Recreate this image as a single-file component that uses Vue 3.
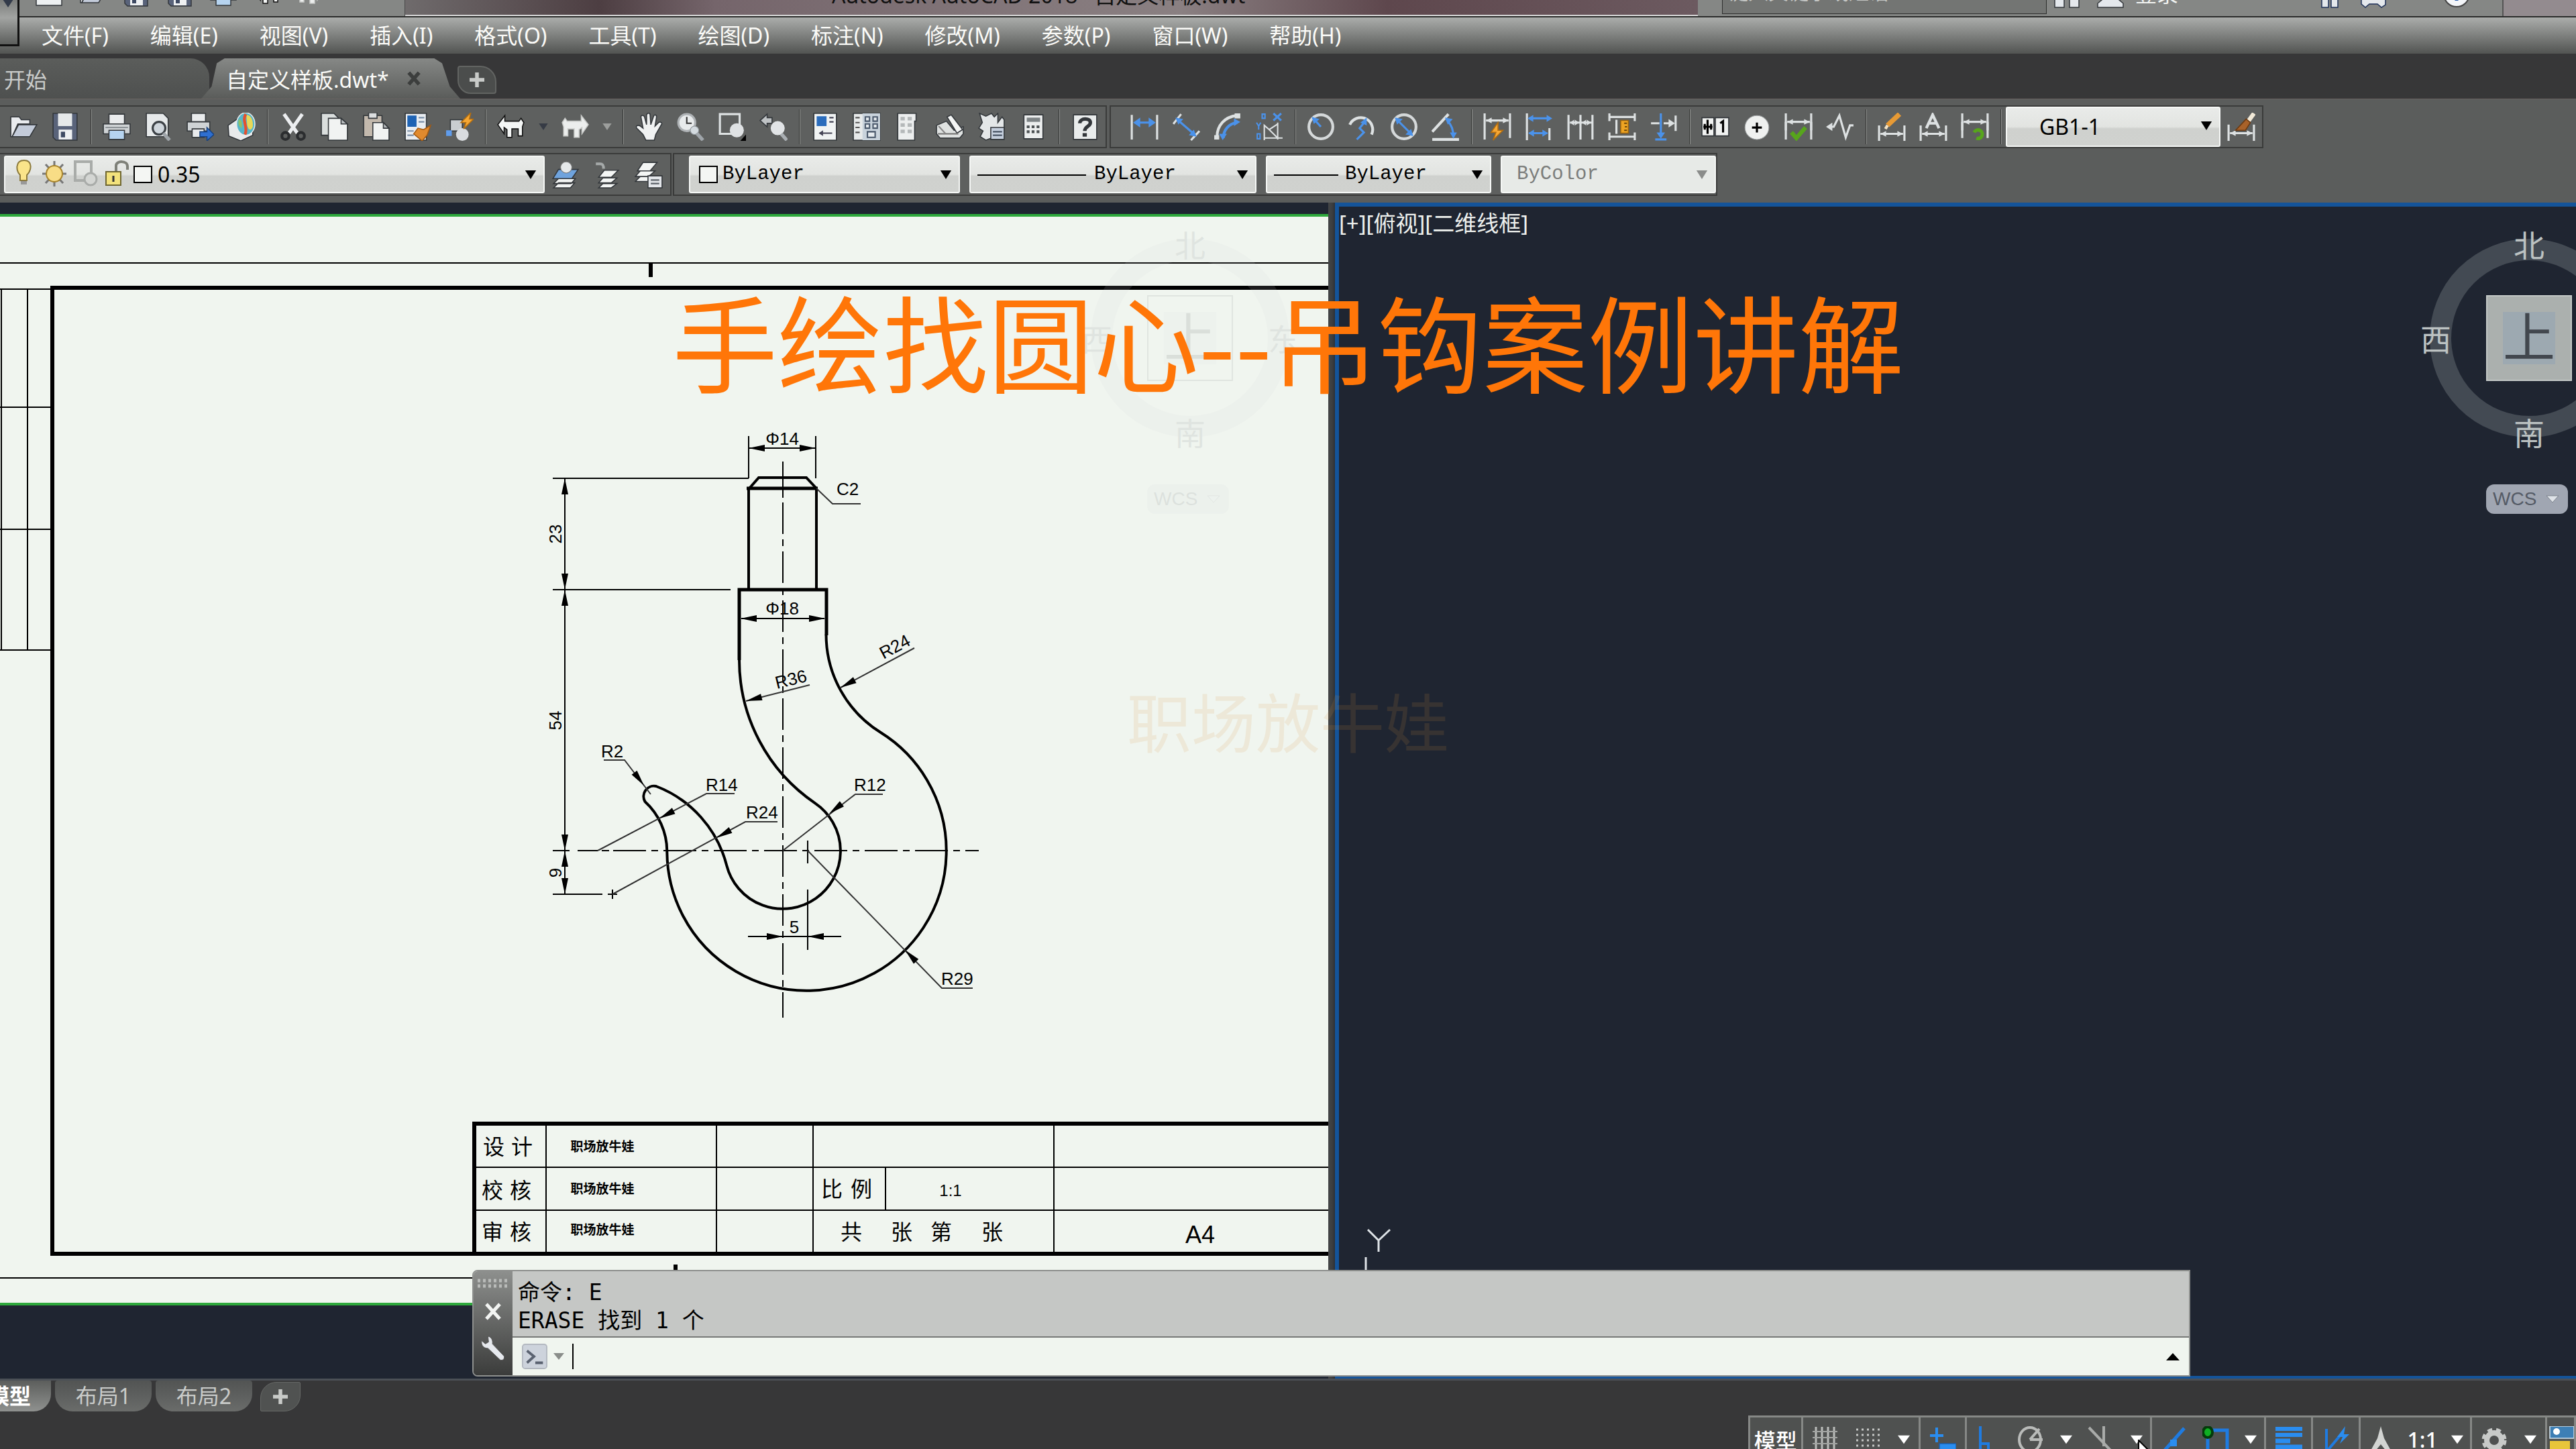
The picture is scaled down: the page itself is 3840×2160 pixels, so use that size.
<template>
  <div class="app">
    <header class="titlebar">
      <div class="quick">
        <button v-for="q in quickIcons" :key="q.label" :aria-label="q.label">
          <svg viewBox="0 0 40 40" v-html="icons[q.icon]"></svg>
        </button>
      </div>
      <div class="caption">Autodesk AutoCAD 2018 &nbsp; 自定义样板.dwt</div>
      <div class="account">
        <input class="search" type="text" aria-label="搜索" placeholder="键入关键字或短语" />
        <button class="find" aria-label="查找"><svg viewBox="0 0 40 40" v-html="icons.binoculars"></svg></button>
        <button class="login">
          <svg viewBox="0 0 40 40" v-html="icons.user"></svg>
          登录
        </button>
        <button class="exchange" aria-label="应用"><svg viewBox="0 0 40 40" v-html="icons.exchange"></svg></button>
        <button aria-label="连接"><svg viewBox="0 0 40 40" v-html="icons.cloud"></svg></button>
        <button class="info" aria-label="帮助"><svg viewBox="0 0 40 40" v-html="icons.info"></svg></button>
        <div class="winbuttons"><button aria-label="最小化"></button></div>
      </div>
    </header>
    <button class="appmenu" aria-label="应用程序菜单">
      <svg viewBox="0 0 16 12"><path d="M0 0h16L8 12z" /></svg>
    </button>

    <nav class="menubar">
      <a v-for="m in menus" :key="m" href="#">{{ m }}</a>
    </nav>

    <div class="filetabs">
      <button class="filetab start">开始</button>
      <button class="filetab active">
        自定义样板.dwt*
        <svg viewBox="0 0 20 20"><path d="M3 2l14 16M17 2L3 18" stroke="#3c3e3d" stroke-width="5" /></svg>
      </button>
      <button class="newtab" aria-label="新建">
        <svg viewBox="0 0 20 20"><path d="M10 0v20M0 10h20" stroke="#c8cac8" stroke-width="5" /></svg>
      </button>
    </div>

    <div class="toolbars">
      <div class="row">
        <div v-for="(bar, b) in toolbars" :key="b" class="toolbar" :class="{ dims: b === 1 }">
          <template v-for="(t, i) in bar" :key="i">
            <i v-if="t === '|'" class="sep"></i>
            <button v-else-if="t === 'caret' || t === 'caretDim'" class="drop" :class="t" aria-label="更多">
              <svg viewBox="0 0 16 12"><path d="M0 0h16L8 12z" /></svg>
            </button>
            <button v-else class="tool" :aria-label="t"><svg viewBox="0 0 40 40" v-html="icons[t]"></svg></button>
          </template>
          <template v-if="b === 1">
            <div class="combo style">
              <select aria-label="标注样式"><option>GB1-1</option></select>
              <svg class="arrow" viewBox="0 0 20 16"><path d="M0 0h20L10 16z" /></svg>
            </div>
            <button class="tool" aria-label="标注样式管理"><svg viewBox="0 0 40 40" v-html="icons.dimStyle"></svg></button>
          </template>
        </div>
      </div>
      <div class="row">
        <div class="toolbar layers">
          <div class="combo layer">
            <svg class="layericons" viewBox="0 0 210 48" v-html="layerIcons"></svg>
            <select aria-label="图层"><option>0.35</option></select>
            <svg class="arrow" viewBox="0 0 20 16"><path d="M0 0h20L10 16z" /></svg>
          </div>
          <button v-for="t in ['layerCurrent', 'layerPrev', 'layerState']" :key="t" class="tool" :aria-label="t">
            <svg viewBox="0 0 40 40" v-html="icons[t]"></svg>
          </button>
        </div>
        <div class="toolbar props">
          <div class="combo color">
            <span class="swatch"></span>
            <select aria-label="颜色"><option>ByLayer</option></select>
            <svg class="arrow" viewBox="0 0 20 16"><path d="M0 0h20L10 16z" /></svg>
          </div>
          <div class="combo linetype">
            <span class="sample"></span>
            <select aria-label="线型"><option>ByLayer</option></select>
            <svg class="arrow" viewBox="0 0 20 16"><path d="M0 0h20L10 16z" /></svg>
          </div>
          <div class="combo weight">
            <span class="sample"></span>
            <select aria-label="线宽"><option>ByLayer</option></select>
            <svg class="arrow" viewBox="0 0 20 16"><path d="M0 0h20L10 16z" /></svg>
          </div>
          <div class="combo plot">
            <select aria-label="打印样式" disabled><option>ByColor</option></select>
            <svg class="arrow" viewBox="0 0 20 16"><path d="M0 0h20L10 16z" /></svg>
          </div>
        </div>
      </div>
    </div>

    <main class="workspace">
      <section class="viewport left">
        <svg class="sheet" viewBox="0 302 1980 1753" preserveAspectRatio="xMinYMin meet">
          <rect x="0" y="322" width="1980" height="1621" fill="#f0f5ef" />
          <path d="M0 321H1980M0 1944H1980" stroke="#2ea83c" stroke-width="4" />

          <!-- sheet frame -->
          <g fill="none" stroke="#000" stroke-width="2">
            <path d="M0 392H1980M0 1905H1980M2 431V969M41 431V969M0 431H78M0 607H78M0 789H78M0 969H78" />
            <path d="M970 392v21M1007 1885v20" stroke-width="6" />
            <path d="M1980 429H78V1869H1980" stroke-width="6" />
          </g>

          <!-- title block -->
          <g fill="none" stroke="#000" stroke-width="2">
            <path d="M1980 1675H707V1869" stroke-width="6" />
            <path d="M707 1740H1980M707 1804H1980M814 1675V1869M1068 1675V1869M1212 1675V1869M1320 1740V1804M1571 1675V1869" />
          </g>
          <g class="block">
            <text v-for="t in blockText" :key="t.x + '-' + t.y" :x="t.x" :y="t.y" :class="t.cls">{{ t.s }}</text>
          </g>

          <!-- centre lines -->
          <g fill="none" stroke="#000" stroke-width="2">
            <path d="M1167 688V742M824 1268H849M861 1268H891M897 1268H908" />
            <path d="M1167 749V1517" stroke-dasharray="47 8 10 8" />
            <path d="M914 1268H1459" stroke-dasharray="49 8 10 8" />
          </g>

          <!-- hook outline -->
          <g fill="none" stroke="#000" stroke-width="4">
            <path d="M1117 728L1131 712H1202L1217 728M1116 728V878M1217 728V878" />
            <path d="M1113 728H1219M1102 984V879H1232V947" stroke-width="5" />
            <path
              d="M1102 983A258.5 258.5 0 0 0 1215.1 1197.3A86.2 86.2 0 1 1 1083.2 1290A172.3 172.3 0 0 0 978 1172A15.5 15.5 0 0 0 961.5 1195A100.5 100.5 0 0 1 994.3 1268.5A208.2 208.2 0 1 0 1312.6 1091.8A172.3 172.3 0 0 1 1231.5 946"
            />
          </g>

          <!-- dimensions -->
          <g fill="none" stroke="#000" stroke-width="2">
            <path d="M1116 650V713M1216 650V713M1116 668H1216" />
            <path d="M824 713H1116M824 879H1089M824 1333H898M842 713V1333" />
            <path d="M1105 922H1229M1115 1396H1254M1204 1253V1287M1204 1326V1416" />
            <path d="M906 1333H920M913 1326V1340" />
          </g>
          <g fill="none" stroke="#333" stroke-width="2">
            <path d="M1217 728L1241 751H1283" />
            <path d="M891 1268L1053 1183H1095M913 1333L1111 1225H1159M900 1133H931L970 1184" />
            <path d="M1167 1268L1275 1184H1316M1204 1268L1404 1473H1450M1253 1025L1363 966M1112 1045L1207 1021" />
          </g>
          <path
            v-for="a in arrows"
            :key="a.join()"
            d="M0 0L24 -5V5Z"
            :transform="`translate(${a[0]} ${a[1]}) rotate(${a[2]})`"
          />
          <g class="dim">
            <text
              v-for="d in dims"
              :key="d.x + '-' + d.y"
              :text-anchor="d.mid ? 'middle' : 'start'"
              :transform="`translate(${d.x} ${d.y}) rotate(${d.r || 0})`"
            >{{ d.s }}</text>
          </g>
        </svg>
        <div class="viewcube ghost">
          <div class="ring"></div>
          <b class="n">北</b><b class="w">西</b><b class="e">东</b><b class="s">南</b>
          <div class="face"><span>上</span></div>
          <button class="wcs">WCS <svg viewBox="0 0 20 12"><path d="M1 1h18L10 11z" /></svg></button>
        </div>
      </section>

      <div class="splitter"></div>

      <section class="viewport right">
        <div class="viewlabel">[+][俯视][二维线框]</div>
        <div class="viewcube">
          <div class="ring"></div>
          <b class="n">北</b><b class="w">西</b><b class="s">南</b>
          <div class="face"><span>上</span></div>
          <button class="wcs">WCS <svg viewBox="0 0 20 12"><path d="M1 1h18L10 11z" /></svg></button>
        </div>
        <svg class="ucs" viewBox="0 0 60 80">
          <path d="M25 2L41 18L58 2M41 18V35M22 43V80" fill="none" stroke="#dfe4e8" stroke-width="3" />
        </svg>
      </section>

      <h1 class="headline">手绘找圆心--吊钩案例讲解</h1>
      <div class="watermark">职场放牛娃</div>

      <section class="command">
        <div class="handle">
          <svg class="grip" viewBox="0 0 46 14"><path d="M0 3H46M0 11H46" stroke="#b9bbb9" stroke-width="5" stroke-dasharray="4 4" /></svg>
          <button aria-label="关闭"><svg viewBox="0 0 26 26"><path d="M3 2l20 22M23 2L3 24" stroke="#f2f4f2" stroke-width="5" /></svg></button>
          <button aria-label="自定义" class="wrench">
            <svg viewBox="0 0 40 40"><path d="M12 2l1 9-5 3-6-5c-1 7 3 12 10 12l19 18c4 2 8-2 6-6L19 14c1-6-2-11-7-12z" fill="#e6e9ee" stroke="#555" /></svg>
          </button>
        </div>
        <div class="console">
          <div class="history">
            <p>命令: E</p>
            <p>ERASE 找到 1 个</p>
          </div>
          <div class="prompt">
            <button class="recent" aria-label="最近使用的命令">
              <svg viewBox="0 0 40 40">
                <rect x="1" y="1" width="38" height="38" rx="4" fill="#cdd3dc" stroke="#b3b8c0" stroke-width="2" />
                <path d="M8 11l11 9-11 10M21 30h12" fill="none" stroke="#5a6270" stroke-width="4" />
              </svg>
              <svg class="mini" viewBox="0 0 16 10"><path d="M0 0h16L8 10z" fill="#8a8d8a" /></svg>
            </button>
            <span class="cursor"></span>
            <input type="text" aria-label="命令" />
            <button class="expand" aria-label="展开"><svg viewBox="0 0 20 11"><path d="M0 11h20L10 0z" /></svg></button>
          </div>
        </div>
      </section>
    </main>

    <footer class="bottom">
      <div class="layouts">
        <button class="layout model">模型</button>
        <button class="layout">布局1</button>
        <button class="layout">布局2</button>
        <button class="newlayout" aria-label="新建布局">
          <svg viewBox="0 0 20 20"><path d="M10 0v20M0 10h20" stroke="#c8cac8" stroke-width="5" /></svg>
        </button>
      </div>
      <div class="status">
        <div v-for="(cell, c) in statusCells" :key="c" class="cell" :class="'c' + c">
          <template v-for="(s, i) in cell" :key="i">
            <button v-if="s === 'v'" class="sdrop" aria-label="更多">
              <svg viewBox="0 0 20 14"><path d="M0 0h20L10 14z" fill="#fff" /></svg>
            </button>
            <button v-else-if="icons[s]" class="sicon" :aria-label="s"><svg viewBox="0 0 40 40" v-html="icons[s]"></svg></button>
            <button v-else class="stext">{{ s }}</button>
          </template>
        </div>
      </div>
    </footer>
    <svg class="pointer" viewBox="0 0 24 36">
      <path d="M2 1V30L9 24L13 34L18 32L14 22H23Z" fill="#fff" stroke="#000" stroke-width="2" />
    </svg>
  </div>
</template>

<script setup>
const menus = [
  '文件(F)', '编辑(E)', '视图(V)', '插入(I)', '格式(O)', '工具(T)',
  '绘图(D)', '标注(N)', '修改(M)', '参数(P)', '窗口(W)', '帮助(H)',
]

const quickIcons = [
  { icon: 'page', label: '新建' },
  { icon: 'open', label: '打开' },
  { icon: 'save', label: '保存' },
  { icon: 'save', label: '另存为' },
  { icon: 'print', label: '打印' },
  { icon: 'undo', label: '放弃' },
  { icon: 'redo', label: '重做' },
]

const toolbars = [
  [
    'open', 'save', '|', 'print', 'preview', 'publish', 'globe', '|',
    'cut', 'copy', 'paste', 'match', 'blockEdit', '|', 'undo', 'caret', 'redo', 'caretDim', '|',
    'pan', 'zoomTime', 'zoomWin', 'zoomPrev', '|',
    'properties', 'designCenter', 'palettes', 'sheetSet', 'markup', 'calc', '|', 'help',
  ],
  [
    'linear', 'aligned', 'arcLen', 'ordinate', '|', 'radius', 'jogged', 'diameter', 'angular', '|',
    'quickDim', 'baseline', 'continueDim', 'space', 'breakDim', '|',
    'tolerance', 'center', 'inspect', 'jogLine', '|', 'dimEdit', 'dimText', 'dimUpdate', '|',
  ],
]

const statusCells = [
  ['模型'],
  ['grid', 'snap', 'v'],
  ['dynInput'],
  ['ortho', 'polar', 'v', 'iso', 'v'],
  ['track', 'osnap', 'v'],
  ['lineweight'],
  ['annoVis'],
  ['annoScale', '1:1', 'v'],
  ['gear', 'v'],
  ['monitor'],
]

// x, y of the tip and the direction the tail points to
const arrows = [
  [1116, 668, 0], [1216, 668, 180],
  [842, 713, 90], [842, 879, -90], [842, 879, 90], [842, 1268, -90], [842, 1268, 90], [842, 1333, -90],
  [1104, 922, 0], [1230, 922, 180],
  [1167, 1396, 180], [1204, 1396, 0],
  [1253, 1025, -28], [1112, 1045, -14],
  [960, 1171, -127], [983, 1220, -28], [1068, 1249, -29], [1236, 1213, -38], [1349, 1416, 46],
]

const dims = [
  { s: 'Φ14', x: 1166, y: 663, mid: true },
  { s: 'C2', x: 1247, y: 738 },
  { s: '23', x: 837, y: 796, r: -90, mid: true },
  { s: '54', x: 837, y: 1074, r: -90, mid: true },
  { s: '9', x: 837, y: 1301, r: -90, mid: true },
  { s: 'Φ18', x: 1166, y: 916, mid: true },
  { s: 'R24', x: 1317, y: 983, r: -28 },
  { s: 'R36', x: 1158, y: 1027, r: -14 },
  { s: 'R2', x: 896, y: 1129 },
  { s: 'R14', x: 1052, y: 1179 },
  { s: 'R24', x: 1112, y: 1220 },
  { s: 'R12', x: 1273, y: 1179 },
  { s: 'R29', x: 1403, y: 1468 },
  { s: '5', x: 1184, y: 1391, mid: true },
]

const blockText = [
  { s: '设', x: 736, y: 1721 }, { s: '计', x: 778, y: 1721 },
  { s: '校', x: 734, y: 1786 }, { s: '核', x: 776, y: 1786 },
  { s: '审', x: 734, y: 1848 }, { s: '核', x: 776, y: 1848 },
  { s: '职场放牛娃', x: 898, y: 1716, cls: 'name' },
  { s: '职场放牛娃', x: 898, y: 1779, cls: 'name' },
  { s: '职场放牛娃', x: 898, y: 1840, cls: 'name' },
  { s: '比', x: 1240, y: 1784 }, { s: '例', x: 1284, y: 1784 },
  { s: '1:1', x: 1417, y: 1783, cls: 'latin' },
  { s: '共', x: 1269, y: 1848 }, { s: '张', x: 1344, y: 1848 },
  { s: '第', x: 1403, y: 1848 }, { s: '张', x: 1479, y: 1848 },
  { s: 'A4', x: 1789, y: 1853, cls: 'latin big' },
]

const L = '#dde1e2'
const B = '#4b92ea'
const line = (d, c = L, w = 3) => `<path d="${d}" fill="none" stroke="${c}" stroke-width="${w}"/>`
const fill = (d, c = L, s = '#33373b') => `<path d="${d}" fill="${c}" stroke="${s}" stroke-width="1.5"/>`
const dimBar = (y) => line(`M2 ${y - 12}V${y + 12}M38 ${y - 12}V${y + 12}M4 ${y}H36`) + fill(`M4 ${y}l8-4v8zM36 ${y}l-8-4v8z`, L, 'none')

const icons = {
  page: fill('M1 0H39V38H1Z', '#eef1f2'),
  open: fill('M2 6H14L17 10H29V16H12L4 34H2Z', '#e9ebee') + fill('M4 34L13 17H39L29 34Z', '#c3cbd9'),
  save: fill('M3 1H37V39H7L3 35Z', '#59637a') + fill('M10 1H30V19H10Z', '#e6e9ea', 'none') + fill('M11 24H30V38H11Z', '#eef0f2', 'none') + fill('M14 27H20V35H14Z', '#3e4a63', 'none'),
  print: fill('M9 2H31V16H9Z', '#e9ebec') + fill('M1 16H39V30H1Z', '#cfd3d5') + fill('M9 25H31V38H9Z', '#b6d4f0') + line('M4 21H36', '#8d9397', 2),
  preview: fill('M3 1H27L34 8V34H3Z', '#e6e9ea') + '<circle cx="21" cy="22" r="9" fill="#cfd6dc" stroke="#3c4146" stroke-width="3"/>' + line('M27 29L36 39', '#9fa5aa', 5),
  publish: fill('M8 1H28V13H8Z', '#e9ebec') + fill('M2 13H34V26H2Z', '#cfd3d5') + fill('M9 23H26V35H9Z', '#e8eaec') + fill('M20 27H30V21L40 31L30 40V34H20Z', '#2f6fd0', '#18427f'),
  globe: fill('M1 18L14 9L36 14V32L19 40L2 33Z', '#e8eaeb') + '<ellipse cx="26" cy="16" rx="13" ry="16" fill="#57b5c9" stroke="#e8eaeb" stroke-width="1.5"/>' + fill('M27 3C34 3 37 12 36 20C33 27 29 24 28 17Z', '#e8d857', 'none') + fill('M16 10C20 8 22 16 20 22C16 20 15 15 16 10Z', '#8cc36a', 'none') + line('M26 2C20 12 30 20 25 31', '#e5502e', 4),
  cut: line('M7 2L26 29M33 2L14 29', '#eceef0', 5) + '<g fill="none" stroke="#2b2d2f" stroke-width="4"><circle cx="9" cy="33" r="5"/><circle cx="31" cy="33" r="5"/></g>',
  copy: fill('M1 1H19L25 7V32H1Z', '#dadedd') + fill('M11 8H29L38 16V39H11Z', '#f1f3f2') + fill('M29 8V16H38Z', '#b9bdbf'),
  paste: fill('M2 4H28V34H2Z', '#c3b9ad') + fill('M9 0H21V8H9Z', '#dcdedf') + fill('M15 14H30L38 22V39H15Z', '#f1f3f2') + fill('M30 14V22H38Z', '#b9bdbf'),
  match: fill('M2 1H32V39H2Z', '#e9edf1') + fill('M5 4H18V20H5Z', '#1e63b4', 'none') + line('M21 7H29M21 13H29M5 26H14M5 32H14', '#7b90a8', 2) + fill('M38 18L28 24L20 22L14 30L26 40L33 32Z', '#e18a2e', '#a35a12'),
  blockEdit: fill('M7 10H24V26H7Z', '#c9cdd1') + fill('M1 25H9V33H1Z', '#5f9cec', 'none') + '<circle cx="24" cy="31" r="9" fill="#d9dcdf"/>' + fill('M36 0L22 14H29L26 23L40 9H34Z', '#f6a733', '#b26d10'),
  undo: fill('M1 17L11 4V12H31L34 8L38 14L36 20V33H30V23H21V35H14V24L10 21V30Z', '#f4f6f5', '#111'),
  redo: fill('M39 17L29 4V12H9L6 8L2 14L4 20V33H10V23H19V35H26V24L30 21V30Z', '#eceeed', '#c8cac8'),
  pan: fill('M12 22L9 6C9 3 13 3 14 6L17 17V3C18 0 22 0 22 3L23 17L27 5C28 2 32 3 31 7L29 19L34 14C37 12 40 15 38 17L30 31L28 39H16L12 31L3 22C1 18 5 17 8 19Z', '#f0f2f2'),
  zoomTime: '<circle cx="15" cy="14" r="12" fill="#e8ebec" stroke="#aeb2b5" stroke-width="3"/>' + line('M15 6V15H22', '#333', 2) + '<circle cx="26" cy="25" r="6" fill="#d3dadf" stroke="#8d9499"/>' + line('M29 29L38 39', '#9fa5aa', 5),
  zoomWin: line('M3 2H31V30H3Z') + '<circle cx="27" cy="25" r="10" fill="#dfe2e4"/>' + fill('M40 40H32L40 31Z', '#000', 'none'),
  zoomPrev: fill('M1 11L11 2V7H18V15H11V20Z', '#bfc3c5') + '<circle cx="26" cy="22" r="10" fill="#e1e4e6"/>' + line('M31 30L39 39', '#a9aeb2', 5),
  properties: fill('M4 1H36V39H4Z', '#f0f3f3') + fill('M8 5H22V19H8Z', '#2a6cbc', 'none') + line('M26 7H32M26 13H32M12 29H30', '#445', 2) + fill('M11 29l6-4v8z', '#445', 'none'),
  designCenter: fill('M1 1H39V39H1Z', '#e7eaea') + fill('M14 1H39V39H14Z', '#c9d3dc', 'none') + line('M4 7H10M4 14H10M4 21H10M4 28H10', '#555', 2) + '<g fill="#e6ebef" stroke="#4a586b" stroke-width="2"><path d="M18 6h6v6h-6zM29 6h6v6h-6zM18 16h6v6h-6zM29 16h6v6h-6zM21 27h11v8H21z"/></g>',
  palettes: fill('M5 1H31V12H29V39H5Z', '#eceeee') + '<g fill="#b4b8b9"><path d="M9 6h6v5H9zM19 6h6v5h-6zM9 15h6v5H9zM19 15h6v5h-6zM9 24h6v5H9zM19 24h6v5h-6z"/></g>',
  sheetSet: fill('M1 18L15 12L26 25L39 20V30L34 36L6 36L1 30Z', '#dfe2e1') + fill('M16 6L22 3L38 24L30 29Z', '#f4f6f5') + line('M3 30H32', '#777', 2) + line('M4 19L14 30', '#888', 2),
  markup: fill('M3 1L12 5L20 1L24 6L29 1V14L35 6L38 10V24H22L20 36L12 39L4 34L8 26L2 22L7 14Z', '#e4e7e8') + fill('M19 21H38V38H19Z', '#c5cfdd') + line('M22 27H35M22 32H35', '#4b5767', 2),
  calc: fill('M7 3H34V37H7Z', '#eceeee') + fill('M11 7H30V13H11Z', '#7d8385', 'none') + '<g fill="#4d5254"><path d="M11 18h4v4h-4zM18 18h4v4h-4zM25 18h4v4h-4zM11 25h4v4h-4zM18 25h4v4h-4zM25 25h4v4h-4z"/></g>',
  help: fill('M4 3H37V38H4Z', '#e9ecec') + line('M13 15C13 7 28 7 28 14C28 20 20 19 20 26', '#33373b', 5) + fill('M17 29h6v5h-6z', '#33373b', 'none'),
  linear: line('M2 3V38M38 3V38') + line('M6 14H34', B) + fill('M4 14l10-7v14zM36 14l-10-7v14z', B, 'none'),
  aligned: line('M2 16L13 2M27 39L39 26') + line('M9 11L31 30', B) + fill('M5 7l11 2-7 8zM35 34l-11-2 7-8z', B, 'none'),
  arcLen: line('M5 34C5 18 16 6 33 4', L, 4) + fill('M1 32H8V38H1ZM30 1H38V8H30Z', L, 'none') + line('M14 36C14 24 22 16 32 14', B, 4) + fill('M38 13l-9-5v11zM13 39l-5-9h11z', B, 'none'),
  ordinate: line('M13 39V18L20 24L32 16M13 36H39M32 14V38M20 24L33 37', L, 2) + line('M26 1L37 11M37 1L26 11', B, 3) + line('M2 14L5 19L8 14M5 19V24M10 2H14V8H10ZM3 30H7V37H3Z', B, 2),
  radius: '<circle cx="20" cy="20" r="17" fill="none" stroke="#d5d9da" stroke-width="4"/>' + line('M20 20L11 10', B) + fill('M7 6l11 3-8 7z', B, 'none'),
  jogged: line('M2 17A17 17 0 1 1 33 31', L, 4) + line('M12 38L22 28L16 22L24 12', B) + fill('M26 7v11l-9-4z', B, 'none'),
  diameter: '<circle cx="20" cy="20" r="17" fill="none" stroke="#d5d9da" stroke-width="4"/>' + line('M10 10L30 30', B) + fill('M7 7l11 2-8 8zM33 33l-11-2 8-8z', B, 'none'),
  angular: line('M1 27L24 2M1 38H39', L, 4) + line('M23 12C29 18 31 25 31 34', B) + fill('M19 7l11 2-7 8zM31 37l-5-9h10z', B, 'none'),
  quickDim: line('M2 1V38M38 1V36M4 11H36') + fill('M4 11l8-4v8zM36 11l-8-4v8z', L, 'none') + fill('M21 14L11 28H18L14 39L28 25H21Z', '#f6a733', '#b26d10'),
  baseline: line('M3 1V39M35 22V39') + line('M6 8H36M6 29H32', B) + fill('M4 8l8-5v10zM39 8l-8-5v10zM5 29l8-5v10zM33 29l-8-5v10z', B, 'none'),
  continueDim: line('M3 3V38M20 3V38M37 3V38M5 14H36') + fill('M5 14l6-4v8zM18 14l-6-4v8zM22 14l6-4v8zM35 14l-6-4v8z', L, 'none'),
  space: line('M2 1V12M38 1V12M2 6H38M2 28V39M38 28V39M2 34H38M12 10V30') + fill('M18 11H29V29H18Z', '#eea422', '#9a6410') + line('M23 15H27M24 20H27M23 25H27', '#6b4508', 2),
  breakDim: line('M2 15H14M20 15H30M37 4V26') + fill('M36 15l-9-6v12z', L, 'none') + line('M16 1V30M8 38H24', B) + fill('M16 37l-6-9h12z', B, 'none'),
  tolerance: fill('M1 7H18V33H1ZM20 7H39V33H20Z', '#f0f2f1') + line('M9 10V30M3 20H16M5 16V24M14 16V24', '#000', 3) + line('M27 15L31 12V28', '#000', 3),
  center: '<ellipse cx="20" cy="21" rx="17" ry="17" fill="#eff1f0" stroke="#9da1a2"/>' + line('M20 14V28M13 21H27', '#000', 3),
  inspect: dimBar(13) + line('M2 13V38M38 13V38') + line('M10 28L17 36L30 21', '#57a51c', 6),
  jogLine: line('M4 20H11L19 4L28 35L34 18H39') + fill('M0 20l9-6v12z', L, 'none'),
  dimEdit: dimBar(30) + line('M14 18L31 2', '#e79a35', 7) + line('M14 18L11 23', '#f5e3c4', 4),
  dimText: dimBar(30) + line('M10 22L19 3L28 22M13 15H25', L, 4),
  dimUpdate: dimBar(13) + line('M2 13V36M38 13V36') + line('M19 28A6 6 0 1 1 22 36', '#57a51c', 5),
  dimStyle: dimBar(29) + line('M30 12L38 1', '#f2ead8', 6) + fill('M27 9L33 14L26 25L12 25Z', '#a8622a', '#6b3a12'),
  layerCurrent: fill('M3 39L10 32H33L27 39ZM3 33L10 26H34L28 33Z', '#f1f3f2') + fill('M2 26L10 13H38L29 26Z', '#6fa3dd') + '<circle cx="21" cy="10" r="8" fill="#e6e9ea" stroke="#777"/>',
  layerPrev: fill('M8 39L14 33H34L26 39ZM8 32L14 25H34L26 32ZM8 24L16 14H36L26 24Z', '#f4f6f5') + line('M4 5H10C15 5 15 9 15 12', '#a5a9a9', 4),
  layerState: fill('M1 30L8 23H28L20 30ZM1 23L8 15H29L20 23ZM4 15L12 3H32L22 15Z', '#f4f6f5') + fill('M19 22H39V39H19Z', '#e3e6ea') + line('M23 28H35M23 33H35', '#5b6168', 2),
  binoculars: fill('M2 8H16V38H2ZM24 8H38V38H24ZM14 14H26V22H14Z', '#e4e8ec'),
  user: fill('M14 8H26L27 22L39 32V38H1V32L13 22Z', '#e4e8ec'),
  exchange: fill('M8 20H18V38H8ZM22 20H32V38H22Z', '#e4e8ec', '#1e3158'),
  cloud: fill('M2 26H38V34L32 38L26 33H14L8 38L2 33Z', '#e4e8ec', '#1e3158'),
  info: '<circle cx="20" cy="18" r="19" fill="#f3f5f8" stroke="#444" stroke-width="2"/>' + line('M20 8V28', '#1f56a8', 5),
  grid: line('M7 1V40M16 1V40M25 1V40M34 1V40', '#b9bbb9', 3) + line('M2 8H39M2 17H39M2 26H39M2 35H39', '#a3a5a3', 2),
  snap: '<path d="M2 5H38M2 13H38M2 21H38M2 29H38M2 37H38" stroke="#c6c8c6" stroke-width="3" stroke-dasharray="3 5"/>',
  dynInput: line('M11 2V24M1 14H21', '#2a8df0', 4) + fill('M15 26H40V40H15Z', '#2a8df0', '#1b5fae'),
  ortho: line('M8 0V38H40M8 26H20V38', '#1f7be0', 4),
  polar: '<ellipse cx="19" cy="20" rx="16" ry="18" fill="none" stroke="#b9bbb9" stroke-width="4"/>' + line('M19 20H38M19 20L33 4', '#b9bbb9', 4),
  iso: line('M24 0V30M2 2L38 40', '#a9aba9', 4),
  track: line('M5 38L36 3', '#1f7be0', 5) + fill('M15 20H25V30H15Z', '#2a8df0', 'none'),
  osnap: line('M8 6H37V40M8 6V40', '#1f7be0', 5) + '<ellipse cx="8" cy="9" rx="7" ry="8" fill="#0fae22" stroke="#043a0a" stroke-width="4"/>',
  lineweight: line('M0 4H40M0 13H40', '#2a8df0', 6) + line('M0 22H22M0 31H40M0 39H40', '#2a8df0', 7),
  annoVis: line('M6 4V38H20M6 38L28 12', '#1f7be0', 4) + fill('M34 0L22 16H30L26 26L40 12H32Z', '#2a8df0', 'none'),
  annoScale: fill('M20 0L25 18L36 38H29L20 27L11 38H4L15 18Z', '#d2d4d2', 'none'),
  gear: '<circle cx="20" cy="21" r="11" fill="none" stroke="#c8cac8" stroke-width="8"/><circle cx="20" cy="21" r="16" fill="none" stroke="#c8cac8" stroke-width="5" stroke-dasharray="7 6"/>',
  monitor: fill('M4 0H40V18H4Z', '#3d7fb5', '#d8e6f0') + fill('M4 22H34V40H4Z', '#e8c53a', 'none') + '<circle cx="14" cy="8" r="5" fill="#fff"/>',
}

// bulb, sun, viewport freeze and padlock in front of the layer name
const layerIcons =
  '<path d="M20 4C6 4 8 20 14 26V34H24V26C32 18 32 4 20 4Z" fill="#fae48a" stroke="#8c7a3c" stroke-width="2"/>' +
  '<path d="M15 35H24V40H15Z" fill="#999"/>' +
  '<path d="M65 5V43M47 24H83M52 10L78 38M78 10L52 38" stroke="#777" stroke-width="3"/><circle cx="65" cy="24" r="12" fill="#f8dd86" stroke="#a8842c" stroke-width="2"/>' +
  '<path d="M96 6H120V34H96Z" fill="none" stroke="#a9aca9" stroke-width="4"/><circle cx="119" cy="32" r="9" fill="#d4d6d3" stroke="#a9aca9" stroke-width="3"/>' +
  '<path d="M157 20V12C157 4 174 4 174 13V18" fill="none" stroke="#7e8078" stroke-width="4"/><path d="M142 21H164V41H142Z" fill="#f3e27c" stroke="#6f6732" stroke-width="2"/><path d="M153 27V36" stroke="#333" stroke-width="3"/>'
</script>

<style>
body {
  background: #373738;
  overflow: hidden;
}
</style>

<style scoped>
.app {
  position: relative;
  display: flex;
  flex-direction: column;
  height: 100vh;
  overflow: hidden;
  background: #373738;
  font-family: "Noto Sans", "Noto Sans CJK SC", sans-serif;
  font-size: 32px;
}

button {
  background: none;
  border: none;
  padding: 0;
  margin: 0;
  font: inherit;
  color: inherit;
}

svg {
  display: block;
}

/* title bar */
.titlebar {
  display: flex;
  flex-shrink: 0;
  height: 24px;
  overflow: hidden;
  background: #858785;
  border-bottom: 2px solid #2b2c2b;
}

.titlebar svg {
  width: 40px;
  height: 40px;
}

.quick {
  display: flex;
  align-items: flex-end;
  flex-shrink: 0;
  box-sizing: border-box;
  width: 604px;
  padding: 0 0 14px 53px;
  gap: 25px;
  border-right: 1px solid #4a4a4a;
}

.caption {
  display: flex;
  flex: 1;
  align-items: flex-end;
  padding-left: 636px;
  padding-bottom: 10px;
  line-height: 38px;
  color: #111;
  background: linear-gradient(90deg, #6f6b6c, #4d3e42 15%, #75656b 24%, #8a8082 60%, #5e474d 76%, #6c5a60);
  border-bottom: 2px solid #d8d8d8;
  white-space: nowrap;
}

.account {
  display: flex;
  align-items: flex-end;
  flex-shrink: 0;
  width: 1309px;
}

.account button {
  margin-bottom: 11px;
}

.search {
  box-sizing: border-box;
  width: 484px;
  height: 60px;
  margin-left: 36px;
  margin-bottom: 3px;
  padding: 0 8px 8px;
  border: 1px solid #2d2e2d;
  background: #737573;
  font: inherit;
  font-size: 30px;
}

.search::placeholder {
  color: #c3c5c3;
  opacity: 1;
}

.find {
  margin-left: 10px;
}

.login {
  display: flex;
  align-items: flex-end;
  gap: 17px;
  height: 40px;
  margin-left: 25px;
  line-height: 44px;
  color: #f2f4f2;
}

.account .exchange {
  margin-left: 206px;
}

.exchange + button {
  margin-left: 25px;
}

.info {
  margin-left: 84px;
}

.winbuttons {
  flex: 1;
  height: 24px;
  margin-left: 48px;
  background: #938b8f;
  border-left: 2px solid #555;
}

.winbuttons button {
  width: 100%;
  height: 12px;
  margin-left: 40px;
  border: 2px solid #666;
  border-top: 0;
  border-radius: 0 0 0 8px;
}

.appmenu {
  position: absolute;
  left: 0;
  top: 0;
  width: 29px;
  height: 69px;
  background: linear-gradient(#7c7e7c, #a2a4a2 40%, #5c5e5c);
  border-right: 3px solid #111;
  border-bottom: 3px solid #111;
}

.appmenu svg {
  width: 16px;
  height: 12px;
  margin: -34px auto 0 4px;
  fill: #333b4a;
}

/* menu bar */
.menubar {
  display: flex;
  align-items: center;
  flex-shrink: 0;
  height: 54px;
  padding-left: 62px;
  gap: 62px;
  background: linear-gradient(#abadab, #7e807e 50%, #525452);
}

.menubar a {
  color: #fbfbf8;
  text-decoration: none;
  line-height: 44px;
}

/* file tabs */
.filetabs {
  display: flex;
  align-items: flex-end;
  flex-shrink: 0;
  height: 67px;
}

.filetab {
  display: flex;
  align-items: center;
  box-sizing: border-box;
  height: 60px;
  color: #fafaf7;
}

.start {
  width: 312px;
  padding-left: 6px;
  border-radius: 0 28px 0 0;
  background: linear-gradient(#5b5d5b, #4e504f);
  color: #c9cbc9;
}

.active {
  width: 386px;
  margin-left: -12px;
  padding-left: 37px;
  gap: 26px;
  background: linear-gradient(#868886, #5a5c5a);
  clip-path: polygon(0 100%, 4% 70%, 6% 12%, 9% 0, 90% 0, 93% 12%, 96% 70%, 100% 100%);
}

.active svg {
  width: 22px;
  height: 22px;
}

.newtab {
  display: grid;
  place-items: center;
  width: 58px;
  height: 42px;
  margin: 0 0 7px -4px;
  border: 2px solid #626462;
  border-radius: 4px 24px 4px 20px;
  box-sizing: border-box;
  background: #4b4d4c;
}

.newtab svg,
.newlayout svg {
  width: 22px;
  height: 22px;
}

/* toolbars */
.toolbars {
  display: flex;
  flex-direction: column;
  flex-shrink: 0;
  gap: 7px;
  padding: 9px 0 10px;
  background: #5b5d5c;
  border-top: 1px solid #6a6462;
}

.row {
  display: flex;
  height: 64px;
}

.toolbar {
  display: flex;
  align-items: center;
  box-sizing: border-box;
  border: 2px solid #3a3b3a;
  border-left: 0;
  background: #5e605f;
  padding-left: 4px;
}

.toolbar.dims {
  margin-left: 4px;
  padding-left: 19px;
  border-left: 2px solid #3a3b3a;
}

.tool {
  display: grid;
  place-items: center;
  width: 62px;
  height: 58px;
}

.tool svg {
  width: 42px;
  height: 42px;
}

.drop {
  display: grid;
  place-items: center;
  width: 33px;
  height: 58px;
}

.drop svg {
  width: 16px;
  height: 10px;
  fill: #363b45;
}

.caretDim svg {
  fill: #9c9e9c;
}

.sep {
  width: 15px;
  height: 52px;
  background: linear-gradient(90deg, transparent 7px, #343534 7px, #343534 8px, #8d8f8d 8px, #8d8f8d 9px, transparent 9px);
}

.combo {
  position: relative;
  box-sizing: border-box;
  height: 56px;
}

.combo select {
  appearance: none;
  box-sizing: border-box;
  width: 100%;
  height: 100%;
  margin: 0;
  padding-bottom: 2px;
  border: 2px solid #f6f8f6;
  border-radius: 3px;
  background: linear-gradient(#e9ebe9, #e2e4e1 50%, #cfd1ce 55%, #d0d2cf);
  color: #000;
  font: inherit;
  opacity: 1;
}

.combo .arrow {
  position: absolute;
  right: 11px;
  top: 22px;
  width: 20px;
  height: 13px;
}

.style {
  width: 320px;
  height: 60px;
}

.style select {
  padding-left: 48px;
}

.toolbar.layers {
  width: 1001px;
  padding-left: 6px;
}

.layer {
  width: 806px;
}

.layer select {
  padding-left: 227px;
}

.layericons {
  position: absolute;
  left: 10px;
  top: 3px;
  width: 210px;
  height: 48px;
}

.layer::before,
.swatch {
  content: "";
  position: absolute;
  left: 193px;
  top: 15px;
  width: 28px;
  height: 26px;
  box-sizing: border-box;
  border: 2px solid #000;
  background: #f4f6f3;
}

.swatch {
  left: 15px;
}

.props {
  margin-left: 2px;
  padding-left: 22px;
  gap: 14px;
  border-left: 2px solid #3a3b3a;
  font-family: "Liberation Mono", "Noto Sans CJK SC", monospace;
  font-size: 29px;
}

.color {
  width: 404px;
}

.color select {
  padding-left: 48px;
}

.linetype {
  width: 428px;
}

.linetype select {
  padding-left: 184px;
}

.sample {
  position: absolute;
  left: 12px;
  top: 28px;
  width: 162px;
  height: 2px;
  background: #000;
}

.weight {
  width: 336px;
}

.weight .sample {
  width: 96px;
}

.weight select {
  padding-left: 116px;
}

.plot {
  width: 321px;
}

.combo.plot select {
  padding-left: 22px;
  background: #e7eae7;
  color: #7c7e7c;
}

.plot .arrow {
  fill: #8a8c8a;
}

/* drawing area */
.workspace {
  position: relative;
  display: grid;
  grid-template-columns: 1980fr 10px 1850fr;
  flex: 1;
  min-height: 0;
  background: #1f2531;
  overflow: hidden;
}

.viewport {
  position: relative;
  overflow: hidden;
}

.sheet {
  width: 100%;
}

.splitter {
  background: linear-gradient(90deg, #434546, #3c3e40 60%, #2c3034);
}

.right {
  border: 6px solid #14549a;
  border-right: 0;
  border-bottom-width: 4px;
}

.dim,
.block {
  fill: #000;
}

.dim text {
  font-family: "Liberation Sans", sans-serif;
  font-size: 26px;
}

.block text {
  font-family: "Noto Sans CJK SC", sans-serif;
  font-size: 32px;
  text-anchor: middle;
}

.block .name {
  font-size: 19px;
  font-weight: 700;
}

.block .latin {
  font-family: "Liberation Sans", sans-serif;
  font-size: 24px;
}

.block .big {
  font-size: 36px;
}

.viewlabel {
  padding: 4px 0 0 0;
  font-size: 33px;
  line-height: 42px;
  color: #eef1ee;
}

.viewcube {
  position: absolute;
  right: -78px;
  top: 54px;
  width: 296px;
  height: 420px;
  color: #bcc2c2;
  font-size: 46px;
}

.right .viewcube {
  top: 48px;
}

.ghost {
  right: 58px;
  top: 54px;
  opacity: 0.12;
  color: #6d7377;
}

.ring {
  box-sizing: border-box;
  width: 296px;
  height: 296px;
  border: 32px solid #434a53;
  border-radius: 50%;
}

.ghost .ring {
  border-color: #d6d6dc;
}

.viewcube b {
  position: absolute;
  width: 46px;
  line-height: 46px;
  font-weight: 400;
}

.n {
  left: 125px;
  top: -14px;
}

.w {
  left: -14px;
  top: 126px;
}

.e {
  right: -14px;
  top: 126px;
}

.s {
  left: 125px;
  top: 266px;
}

.face {
  position: absolute;
  left: 84px;
  top: 84px;
  display: grid;
  place-items: center;
  width: 128px;
  height: 128px;
  box-sizing: border-box;
  background: #abb0ae;
  border: 2px solid #c3c8c6;
}

.face span {
  width: 78px;
  height: 78px;
  background: #9da9b1;
  color: #42474e;
  font-size: 78px;
  line-height: 74px;
}

.ghost .face {
  background: transparent;
  border-color: #777;
}

.ghost .face span {
  background: #dcdfe2;
}

.wcs {
  position: absolute;
  left: 84px;
  top: 366px;
  display: flex;
  align-items: center;
  gap: 14px;
  width: 122px;
  height: 44px;
  padding-left: 10px;
  border-radius: 12px;
  background: #a0a6b2;
  color: #555b66;
  font: 28px "Liberation Sans", sans-serif;
}

.wcs svg {
  width: 20px;
  height: 12px;
  fill: #dfe3e8;
  stroke: #7c828c;
}

.ghost .wcs {
  background: #d3d5dd;
}

.ucs {
  position: absolute;
  left: 18px;
  bottom: 140px;
  width: 60px;
  height: 80px;
}

.headline {
  position: absolute;
  left: 0;
  right: 0;
  top: 116px;
  margin: 0;
  text-align: center;
  font-family: "Noto Sans CJK SC", sans-serif;
  font-size: 157px;
  line-height: 176px;
  font-weight: 400;
  color: #ff7608;
  white-space: nowrap;
}

.watermark {
  position: absolute;
  left: 0;
  right: 0;
  top: 717px;
  text-align: center;
  font-size: 96px;
  line-height: 116px;
  color: rgba(214, 150, 60, 0.13);
}

/* command window */
.command {
  position: absolute;
  left: 704px;
  right: 575px;
  bottom: 3px;
  display: flex;
  box-sizing: border-box;
  border: 2px solid #8e908e;
  border-radius: 8px 0 0 8px;
  overflow: hidden;
}

.handle {
  display: flex;
  flex-direction: column;
  align-items: center;
  gap: 22px;
  width: 58px;
  padding-top: 11px;
  background: linear-gradient(#8d8f8d, #3b3c3b);
}

.grip {
  width: 46px;
  height: 14px;
}

.handle button svg {
  width: 26px;
  height: 26px;
}

.handle .wrench svg {
  width: 38px;
  height: 38px;
}

.console {
  flex: 1;
  display: flex;
  flex-direction: column;
}

.history {
  padding: 11px 8px 2px;
  background: #c5c7c5;
  border-bottom: 2px solid #777977;
  font-family: "DejaVu Sans Mono", "Noto Sans CJK SC", monospace;
  font-size: 33px;
}

.history p {
  margin: 0;
  line-height: 42px;
}

.prompt {
  display: flex;
  align-items: center;
  height: 56px;
  padding: 0 14px;
  background: #f0f5ef;
}

.recent {
  display: flex;
  align-items: center;
  gap: 9px;
}

.recent svg {
  width: 38px;
  height: 38px;
}

.recent .mini {
  width: 16px;
  height: 10px;
}

.cursor {
  width: 2px;
  height: 38px;
  margin-left: 12px;
  background: #000;
}

.prompt input {
  flex: 1;
  border: 0;
  outline: 0;
  background: none;
  font: inherit;
}

.expand svg {
  width: 20px;
  height: 11px;
}

/* layout tabs and status bar */
.bottom {
  flex-shrink: 0;
  height: 102px;
  border-top: 3px solid #4b5056;
  overflow: hidden;
}

.layouts {
  display: flex;
  height: 52px;
  gap: 6px;
}

.layout {
  width: 144px;
  height: 46px;
  border-radius: 4px 4px 26px 26px;
  background: linear-gradient(#525453, #6a6c6a);
  color: #c9cbc9;
  line-height: 42px;
}

.layout.model {
  width: 76px;
  padding-right: 30px;
  direction: rtl;
  border-radius: 0 0 26px 0;
  background: linear-gradient(#5c5e5c, #8f918f);
  color: #fff;
  font-weight: 700;
  white-space: nowrap;
}

.newlayout {
  display: grid;
  place-items: center;
  width: 60px;
  height: 44px;
  margin: 2px 0 0 6px;
  border: 1px solid #666866;
  border-radius: 24px 2px 24px 2px;
  background: #505251;
}

.status {
  display: flex;
  box-sizing: border-box;
  width: 1234px;
  height: 68px;
  margin-left: auto;
  border-top: 3px solid #868886;
  border-left: 3px solid #868886;
  background: #4f5150;
}

.cell {
  display: flex;
  align-items: center;
  justify-content: space-around;
  box-sizing: border-box;
  border-right: 3px solid #868886;
  color: #fff;
}

.c0 { width: 79px; }
.c1 { width: 176px; }
.c2 { width: 70px; }
.c3 { width: 278px; }
.c4 { width: 171px; }
.c5 { width: 70px; }
.c6 { width: 71px; }
.c7 { width: 167px; }
.c8 { width: 113px; }
.c9 { flex: 1; }

.c0,
.c7 {
  font-weight: 500;
}

.sicon svg {
  width: 40px;
  height: 40px;
}

.sdrop svg {
  width: 18px;
  height: 14px;
}

.stext {
  white-space: nowrap;
}

.pointer {
  position: absolute;
  right: 630px;
  bottom: -22px;
  width: 24px;
  height: 36px;
}
</style>
